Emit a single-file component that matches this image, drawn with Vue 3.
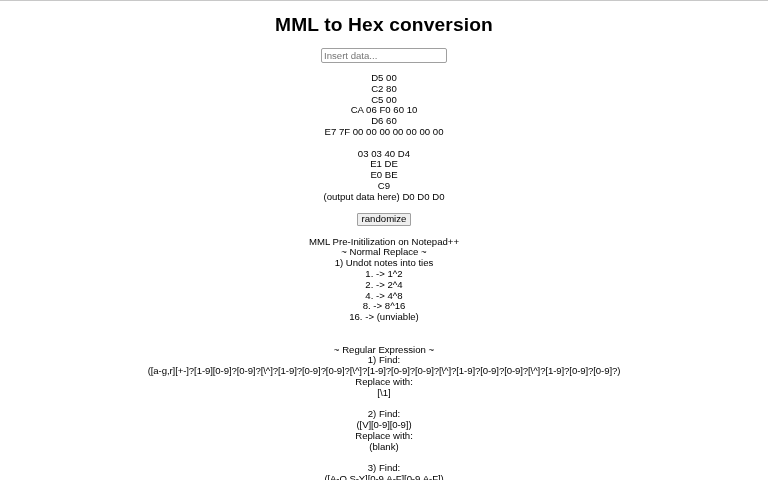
<template>
  <div class="page">
    <h1 class="title">MML to Hex conversion</h1>
    <div class="input-row">
      <input class="data-input" type="text" placeholder="Insert data..." />
    </div>
    <div class="output">
      <div v-for="(line, i) in headerLines" :key="i">{{ line }}</div>
      <br />
      <div v-for="(line, i) in footerLines" :key="i">{{ line }}</div>
    </div>
    <div class="button-row">
      <button class="btn-random" type="button">randomize</button>
    </div>
    <div class="notes">
      <div
        v-for="(line, i) in notes"
        :key="i"
        :class="{ regex: line.startsWith('([') }"
      >
        {{ line }}<br v-if="!line" />
      </div>
    </div>
  </div>
</template>

<script setup>
const headerLines = [
  'D5 00',
  'C2 80',
  'C5 00',
  'CA 06 F0 60 10',
  'D6 60',
  'E7 7F 00 00 00 00 00 00 00',
]

const footerLines = [
  '03 03 40 D4',
  'E1 DE',
  'E0 BE',
  'C9',
  '(output data here) D0 D0 D0',
]

const notes = [
  'MML Pre-Initilization on Notepad++',
  '~ Normal Replace ~',
  '1) Undot notes into ties',
  '1. -> 1^2',
  '2. -> 2^4',
  '4. -> 4^8',
  '8. -> 8^16',
  '16. -> (unviable)',
  '',
  '',
  '~ Regular Expression ~',
  '1) Find:',
  '([a-g,r][+-]?[1-9][0-9]?[0-9]?[\\^]?[1-9]?[0-9]?[0-9]?[\\^]?[1-9]?[0-9]?[0-9]?[\\^]?[1-9]?[0-9]?[0-9]?[\\^]?[1-9]?[0-9]?[0-9]?)',
  'Replace with:',
  '[\\1]',
  '',
  '2) Find:',
  '([V][0-9][0-9])',
  'Replace with:',
  '(blank)',
  '',
  '3) Find:',
  '([A-Q,S-Y][0-9,A-F][0-9,A-F])',
]
</script>

<style scoped>
.page {
  height: 480px;
  overflow: hidden;
  box-sizing: border-box;
  border-top: 1px solid #c8c8c8;
  font-family: "Liberation Sans", Arial, sans-serif;
  font-size: 9.6px;
  line-height: 10.8px;
  color: #000;
  text-align: center;
  filter: blur(0.25px);
}

.title {
  margin: 13px 0 12px;
  font-size: 19.2px;
  line-height: 22px;
  font-weight: 700;
  letter-spacing: 0.14px;
}

.input-row {
  display: flex;
  justify-content: center;
}

.data-input {
  width: 126px;
  height: 15px;
  box-sizing: border-box;
  padding: 0 2px;
  border: 1px solid #a0a0a0;
  border-radius: 2px;
  font-family: inherit;
  font-size: 9.6px;
}

.data-input::placeholder {
  color: #757575;
}

.output {
  margin-top: 10px;
}

.button-row {
  display: flex;
  justify-content: center;
  margin: 10px 0 11px;
}

.btn-random {
  height: 13px;
  padding: 0 4px;
  border: 1px solid #a0a0a0;
  border-radius: 1px;
  background: #efefef;
  font-family: inherit;
  font-size: 9.6px;
  line-height: 1;
  color: #000;
}

.regex {
  letter-spacing: -0.1px;
}
</style>
